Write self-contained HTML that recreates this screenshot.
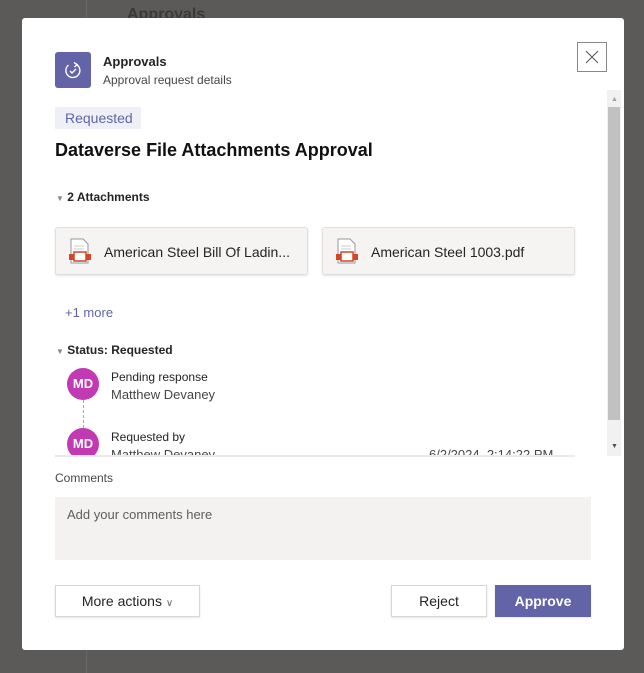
<!DOCTYPE html>
<html><head><style>
*{margin:0;padding:0;box-sizing:border-box}
body{width:644px;height:673px;background:#5b5a58;font-family:"Liberation Sans",sans-serif;position:relative;overflow:hidden;color:#252423}
.a{position:absolute}
.dlg{left:22px;top:18px;width:602px;height:632px;background:#fff;border-radius:3px}
.card{background:#f5f4f3;border:1px solid #e1dfdd;border-radius:3px;box-shadow:0 1px 2px rgba(0,0,0,.12);height:48px;width:253px;font-size:14px}
.av{width:32px;height:32px;border-radius:50%;background:#c239b3;color:#fff;font-weight:bold;font-size:13px;text-align:center;line-height:32px}
.btn{border:1px solid #d6d6d6;background:#fff;height:32px;font-size:14px;text-align:center;line-height:30px;box-shadow:0 1px 2px rgba(0,0,0,.1)}
</style></head><body>
<div class="a" style="left:86px;top:0;width:1px;height:673px;background:#6a6967"></div>
<div class="a" style="left:127px;top:6px;font-size:16px;font-weight:bold;color:#3a3938">Approvals</div>
<div class="a dlg"></div>
<div class="a" style="left:55px;top:52px;width:36px;height:36px;background:#6264a7;border-radius:3px">
<svg width="36" height="36" viewBox="0 0 36 36"><path d="M21.5 12.5 A7 7 0 1 1 13.5 13" fill="none" stroke="#fff" stroke-width="1.4"/><path d="M19 10.5 l3 2 -2.5 2.5" fill="none" stroke="#fff" stroke-width="1.4"/><path d="M15 19 l2 2 4 -4" fill="none" stroke="#fff" stroke-width="1.4"/></svg></div>
<div class="a" style="left:103px;top:54px;font-size:13px;font-weight:bold">Approvals</div>
<div class="a" style="left:103px;top:73px;font-size:12px;color:#484644">Approval request details</div>
<div class="a" style="left:577px;top:42px;width:30px;height:30px;border:1px solid #8a8886">
<svg width="28" height="28"><path d="M8 8 L20 20 M20 8 L8 20" stroke="#555" stroke-width="1"/></svg></div>
<div class="a" style="left:607px;top:90px;width:14px;height:366px;background:#f1f1f1"></div>
<div class="a" style="left:608px;top:107px;width:12px;height:313px;background:#c1c1c1"></div>
<div class="a" style="left:611px;top:96px;font-size:7px;color:#a0a0a0">▲</div>
<div class="a" style="left:611px;top:443px;font-size:7px;color:#505050">▼</div>
<div class="a" style="left:55px;top:107px;width:86px;height:22px;background:#efeff8;color:#6264a7;font-size:14px;line-height:22px;padding-left:10px">Requested</div>
<div class="a" style="left:55px;top:140px;font-size:18px;font-weight:bold;color:#111">Dataverse File Attachments Approval</div>
<div class="a" style="left:56px;top:190px;font-size:12px;font-weight:bold"><span style="font-size:8px;color:#888">▼</span> 2 Attachments</div>
<div class="a card" style="left:55px;top:227px"></div>
<div class="a card" style="left:322px;top:227px"></div>
<svg class="a" style="left:66px;top:237px" width="28" height="28"><path d="M5 2h12l5 5v19H5z" fill="#fff" stroke="#999"/><path d="M8 9h10M8 12h10" stroke="#ccc"/><rect x="3" y="17" width="22" height="6" fill="#d24726"/><rect x="8" y="15" width="12" height="9" fill="#fff" stroke="#d24726" stroke-width="1.5"/></svg>
<svg class="a" style="left:333px;top:237px" width="28" height="28"><path d="M5 2h12l5 5v19H5z" fill="#fff" stroke="#999"/><path d="M8 9h10M8 12h10" stroke="#ccc"/><rect x="3" y="17" width="22" height="6" fill="#d24726"/><rect x="8" y="15" width="12" height="9" fill="#fff" stroke="#d24726" stroke-width="1.5"/></svg>
<div class="a" style="left:104px;top:244px;font-size:14px">American Steel Bill Of Ladin...</div>
<div class="a" style="left:371px;top:244px;font-size:14px">American Steel 1003.pdf</div>
<div class="a" style="left:65px;top:305px;font-size:13px;color:#6264a7">+1 more</div>
<div class="a" style="left:56px;top:343px;font-size:12px;font-weight:bold"><span style="font-size:8px;color:#888">▼</span> Status: Requested</div>
<div class="a av" style="left:67px;top:368px">MD</div>
<div class="a" style="left:83px;top:400px;height:28px;border-left:1px dashed #aaa"></div>
<div class="a" style="left:60px;top:420px;width:50px;height:35px;overflow:hidden"><div class="a av" style="left:7px;top:8px">MD</div></div>
<div class="a" style="left:111px;top:370px;font-size:12px">Pending response</div>
<div class="a" style="left:111px;top:387px;font-size:13px;color:#484644">Matthew Devaney</div>
<div class="a" style="left:111px;top:430px;font-size:12px">Requested by</div>
<div class="a" style="left:55px;top:445px;width:520px;height:10px;overflow:hidden"><div style="position:absolute;left:56px;top:2px;font-size:13px;color:#484644">Matthew Devaney</div><div style="position:absolute;left:374px;top:2px;font-size:13px;color:#484644">6/2/2024, 2:14:22 PM</div></div>
<div class="a" style="left:55px;top:455px;width:520px;height:2px;background:#edebe9"></div>
<div class="a" style="left:55px;top:471px;font-size:12px;color:#484644">Comments</div>
<div class="a" style="left:55px;top:497px;width:536px;height:63px;background:#f3f2f1;font-size:13px;color:#605e5c;padding:10px 12px">Add your comments here</div>
<div class="a btn" style="left:55px;top:585px;width:145px">More actions <span style="font-size:10px;color:#666">&#8744;</span></div>
<div class="a btn" style="left:391px;top:585px;width:96px">Reject</div>
<div class="a btn" style="left:495px;top:585px;width:96px;background:#6264a7;border-color:#6264a7;color:#fff;font-weight:bold">Approve</div>
</body></html>
